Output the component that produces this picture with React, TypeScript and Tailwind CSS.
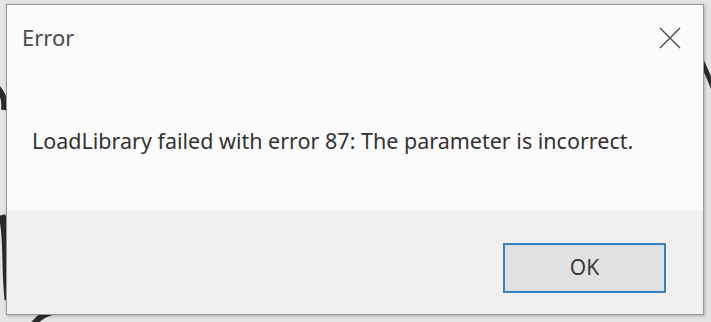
export default function App() {
  return (
    <div className="relative h-[322px] w-[711px] overflow-hidden bg-[#e4e4e4]">
      {/* dark strokes of whatever sits behind the dialog */}
      <svg className="absolute inset-0" width="711" height="322" viewBox="0 0 711 322">
        <path d="M-10 80 C 0 90, 6 96, 4 110" stroke="#2b2b2b" strokeWidth="6" fill="none" />
        <path d="M2 215 C 8 240, 4 260, 8 300" stroke="#2b2b2b" strokeWidth="7" fill="none" />
        <path d="M30 330 C 36 318, 44 314, 52 312" stroke="#2b2b2b" strokeWidth="6" fill="none" />
        <path d="M700 58 C 706 70, 710 80, 715 92" stroke="#2b2b2b" strokeWidth="5" fill="none" />
      </svg>
      <div className="relative pl-[6px] pt-[4px]">
        <div
          className="flex h-[311px] w-[698px] flex-col border border-[#9a9a9a] bg-[#fbfbfb] shadow-[1px_1px_3px_rgba(0,0,0,0.25)]"
          style={{ fontFamily: '"Noto Sans", "Open Sans", sans-serif' }}
        >
          <div className="flex h-[206px] flex-col">
            <div className="flex items-start justify-between pl-[15px] pr-[22px] pt-[17px]">
              <span className="text-[22px] leading-[30px] text-[#4a4a4a]">Error</span>
              <svg className="mt-[5px]" width="22" height="22" viewBox="0 0 22 22">
                <path d="M1 1 L21 21 M21 1 L1 21" stroke="#4a4a4a" strokeWidth="1.4" />
              </svg>
            </div>
            <p className="mt-[75px] pl-[25px] text-[21.5px] leading-[28px] text-[#333333]">
              LoadLibrary failed with error 87: The parameter is incorrect.
            </p>
          </div>
          <div className="flex flex-1 items-start justify-end bg-[#f0f0f0] pr-[37px] pt-[32px]">
            <button className="flex h-[50px] w-[163px] items-center justify-center border-2 border-[#3c81bb] bg-[#e1e1e1] text-[21px] text-[#3a3a3a] shadow-[inset_0_0_0_1px_#cde3f5]">
              OK
            </button>
          </div>
        </div>
      </div>
    </div>
  );
}
